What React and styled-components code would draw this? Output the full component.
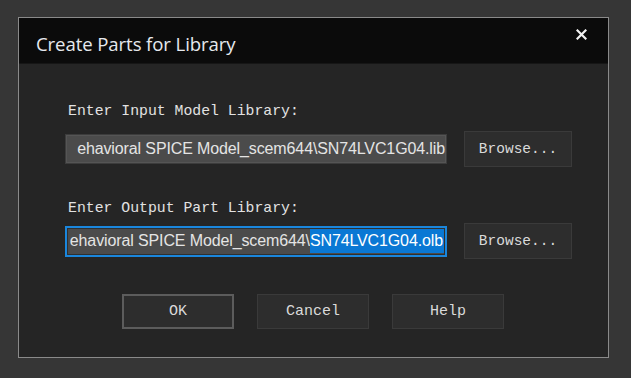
import React from 'react';
import styled, { createGlobalStyle } from 'styled-components';

const GlobalStyle = createGlobalStyle`
  html, body {
    margin: 0;
    padding: 0;
    background: #363636;
  }
  body {
    width: 631px;
    height: 378px;
    overflow: hidden;
  }
`;

const Screen = styled.div`
  padding: 17px 0 0 18px;
`;

const Dialog = styled.div`
  width: 589px;
  height: 339px;
  border: 1px solid #8a8a8a;
  background: #252525;
  display: flex;
  flex-direction: column;
`;

const TitleBar = styled.div`
  height: 45px;
  background: #0b0b0b;
  display: flex;
  align-items: center;
  justify-content: space-between;
  padding: 0 20px 0 17px;
  border-bottom: 1px solid #161616;
`;

const Title = styled.h1`
  margin: 6px 0 0;
  font-family: 'Open Sans', 'Noto Sans', sans-serif;
  font-weight: 400;
  font-size: 18.6px;
  letter-spacing: -0.1px;
  color: #e6e9ee;
`;

const Close = styled.button`
  width: 14px;
  height: 14px;
  padding: 0;
  margin-top: -13px;
  border: 0;
  background: none;
  display: flex;
  align-items: center;
  justify-content: center;
`;

const Body = styled.div`
  flex: 1;
  padding: 37px 35px 0 46px;
  display: flex;
  flex-direction: column;
`;

const Label = styled.div`
  margin-left: 3px;
  height: 20px;
  font-family: 'Liberation Mono', monospace;
  font-size: 14.8px;
  line-height: 20px;
  color: #e2e2e2;
`;

const Row = styled.div`
  display: flex;
  align-items: center;
  gap: 17px;
  margin-top: ${p => p.$top}px;
  height: 36px;
`;

const Field = styled.div`
  box-sizing: border-box;
  width: 382px;
  height: ${p => (p.$focused ? 31 : 30)}px;
  border: ${p => (p.$focused ? '2px solid #1a86dc' : '1px solid #3c3c3c')};
  background: #4b4b4b;
  box-shadow: inset 0 0 0 1px ${p => (p.$focused ? '#2f2f2f' : '#555555')};
  display: flex;
  align-items: center;
  justify-content: flex-end;
  overflow: hidden;
  white-space: nowrap;
  padding: 0 1px;
  font-family: 'Liberation Sans', Arial, sans-serif;
  font-size: 16px;
  letter-spacing: -0.12px;
  color: #e4e4e4;
`;

const Selected = styled.span`
  background: #0a78d4;
  color: #ffffff;
  padding: 3px 1px 3px 0;
`;

const Button = styled.button`
  box-sizing: border-box;
  width: ${p => p.$w || 108}px;
  height: ${p => p.$h || 36}px;
  background: #2d2d2d;
  border: ${p => (p.$default ? '2px solid #5c5c5c' : '1px solid #3a3a3a')};
  font-family: 'Liberation Mono', monospace;
  font-size: ${p => p.$fs || 14.5}px;
  color: #dadada;
  padding: 0;
  cursor: default;
`;

const Actions = styled.div`
  display: flex;
  justify-content: center;
  gap: 23px;
  margin-top: 35px;
  padding-right: 12px;
`;

export default function App() {
  return (
    <>
      <GlobalStyle />
      <Screen>
        <Dialog>
          <TitleBar>
            <Title>Create Parts for Library</Title>
            <Close aria-label="Close">
              <svg width="11" height="11" viewBox="0 0 11 11">
                <path d="M1.5 1.5 L9.5 9.5 M9.5 1.5 L1.5 9.5" stroke="#f2f2f2" strokeWidth="2.2" strokeLinecap="square" />
              </svg>
            </Close>
          </TitleBar>
          <Body>
            <Label>Enter Input Model Library:</Label>
            <Row $top={10}>
              <Field>ehavioral SPICE Model_scem644\SN74LVC1G04.lib</Field>
              <Button>Browse...</Button>
            </Row>
            <Label style={{ marginTop: 31 }}>Enter Output Part Library:</Label>
            <Row $top={5}>
              <Field $focused>
                ehavioral SPICE Model_scem644\<Selected>SN74LVC1G04.olb</Selected>
              </Field>
              <Button>Browse...</Button>
            </Row>
            <Actions>
              <Button $w={112} $h={35} $fs={15} $default>OK</Button>
              <Button $w={112} $h={35} $fs={15}>Cancel</Button>
              <Button $w={112} $h={35} $fs={15}>Help</Button>
            </Actions>
          </Body>
        </Dialog>
      </Screen>
    </>
  );
}
